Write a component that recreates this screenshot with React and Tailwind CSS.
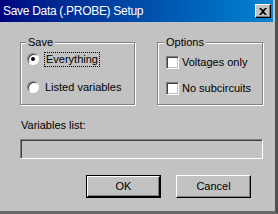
import React from 'react'

function Radio({ checked }) {
  return (
    <span className="relative w-[12px] h-[12px] rounded-full bg-white border border-t-[#808080] border-l-[#808080] border-r-white border-b-white shadow-[inset_1px_1px_0_#404040] flex items-center justify-center shrink-0">
      {checked && <span className="w-[4px] h-[4px] rounded-full bg-black" />}
    </span>
  )
}

function Check() {
  return (
    <span className="w-[13px] h-[13px] bg-white border border-t-[#808080] border-l-[#808080] border-r-white border-b-white shadow-[inset_1px_1px_0_#404040,inset_-1px_-1px_0_#c0c0c0] shrink-0" />
  )
}

function Button({ children, isDefault }) {
  const inner = (
    <div className="flex-1 flex items-center justify-center border border-t-white border-l-white border-r-black border-b-black shadow-[inset_-1px_-1px_0_#808080]">
      {children}
    </div>
  )
  return (
    <div className={'w-[75px] h-[23px] flex ' + (isDefault ? 'border border-black' : '')}>
      {inner}
    </div>
  )
}

export default function App() {
  return (
    <div className="w-[278px] h-[214px] bg-[#c2c2c2] border-r-[3px] border-b-[3px] border-r-[#505050] border-b-[#6a6a6a] flex flex-col font-['Liberation_Sans',Arial,sans-serif] text-[11px] leading-[13px] text-black overflow-hidden">
      <div className="h-[22px] mr-[2px] bg-linear-to-r from-[#000080] to-[#1084d0] flex items-center justify-between pl-[3px] pr-[2px]">
        <span className="text-white text-[12px] tracking-[-0.3px]">Save Data (.PROBE) Setup</span>
        <div className="w-[16px] h-[14px] bg-[#c2c2c2] border border-t-white border-l-white border-r-black border-b-black shadow-[inset_-1px_-1px_0_#808080] flex items-center justify-center">
          <svg width="8" height="7" viewBox="0 0 8 7">
            <path d="M0 0h2l2 2 2-2h2L5 3.5 8 7H6L4 5 2 7H0l3-3.5z" fill="#000" />
          </svg>
        </div>
      </div>

      <div className="flex flex-col pl-[20px] pr-[12px] pt-[14px]">
        <div className="flex gap-[22px]">
          <fieldset className="w-[115px] h-[69px] border border-[#808080] shadow-[inset_1px_1px_0_#fff,1px_1px_0_#fff] p-0 m-0 min-w-0">
            <legend className="ml-[5px] px-[2px] bg-[#c2c2c2]">Save</legend>
            <div className="flex flex-col gap-[12px] pl-[6px] pt-[2px]">
              <div className="h-[16px] flex items-center gap-[5px]">
                <Radio checked />
                <span className="border border-dotted border-black px-[1px] leading-[13px]">Everything</span>
              </div>
              <div className="h-[16px] flex items-center gap-[6px]">
                <Radio />
                <span>Listed variables</span>
              </div>
            </div>
          </fieldset>

          <fieldset className="w-[106px] h-[69px] border border-[#808080] shadow-[inset_1px_1px_0_#fff,1px_1px_0_#fff] p-0 m-0 min-w-0">
            <legend className="ml-[6px] px-[2px] bg-[#c2c2c2]">Options</legend>
            <div className="flex flex-col gap-[10px] pl-[8px] pt-[5px]">
              <div className="h-[16px] flex items-center gap-[3px]">
                <Check />
                <span>Voltages only</span>
              </div>
              <div className="h-[16px] flex items-center gap-[3px]">
                <Check />
                <span>No subcircuits</span>
              </div>
            </div>
          </fieldset>
        </div>

        <div className="mt-[14px] pl-[1px]">Variables list:</div>
        <div className="mt-[7px] h-[20px] bg-[#c2c2c2] border border-t-[#808080] border-l-[#808080] border-r-white border-b-white shadow-[inset_1px_1px_0_#404040,inset_-1px_-1px_0_#c2c2c2]" />

        <div className="mt-[16px] flex justify-end gap-[15px] pr-[12px]">
          <Button isDefault>OK</Button>
          <Button>Cancel</Button>
        </div>
      </div>
    </div>
  )
}
